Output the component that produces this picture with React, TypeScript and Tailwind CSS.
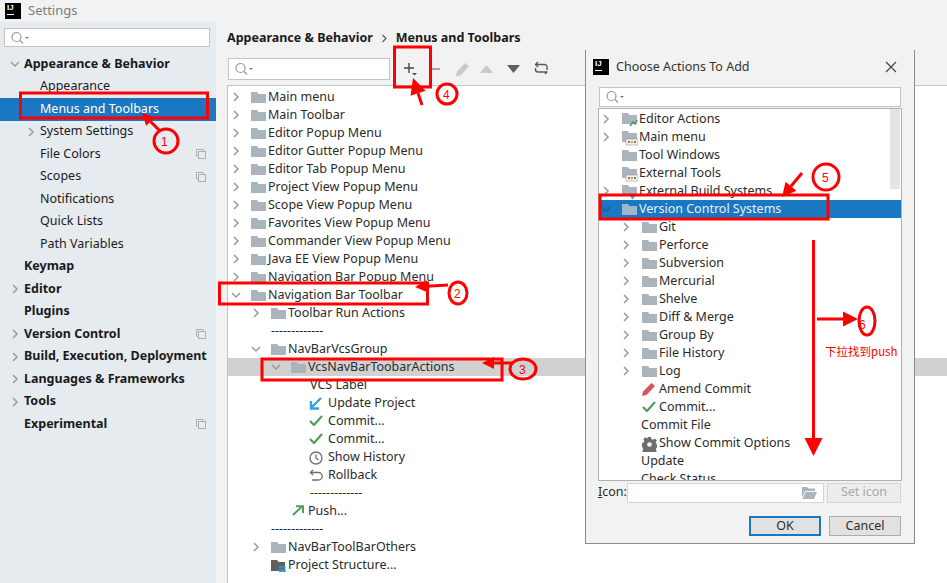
import type { ReactNode } from "react";

const FONT = "font-['Noto_Sans','Open_Sans',sans-serif]";

function Chevron({ open, dark }: { open?: boolean; dark?: boolean }) {
  const color = dark ? "#0f5f9c" : "#9a9a9a";
  return (
    <svg width="10" height="10" viewBox="0 0 10 10" fill="none" stroke={color} strokeWidth="1.5">
      {open ? <path d="M1 3l4 4 4-4" /> : <path d="M3 1l4 4-4 4" />}
    </svg>
  );
}

function Folder({ tint = "#aab4bd" }: { tint?: string }) {
  return (
    <svg width="15" height="13" viewBox="0 0 15 13" fill={tint}>
      <path d="M0 1h6l1.5 2H15v9H0z" />
    </svg>
  );
}

function FolderBadge({ kind }: { kind: "chart" | "bars" | "cloud" }) {
  return (
    <svg width="16" height="15" viewBox="0 0 16 15">
      <path d="M0 0h6l1.5 2H15v9H0z" fill="#aab4bd" />
      {kind === "chart" && <path d="M8 13l3-4 2 2 2-4" fill="none" stroke="#4f9d5d" strokeWidth="1.6" />}
      {kind === "bars" && (
        <g>
          <rect x="4" y="8" width="12" height="6" fill="#f2f2f2" stroke="#999" strokeWidth="0.6" />
          <rect x="6" y="10" width="2" height="2" fill="#e05555" />
          <rect x="9" y="10" width="2" height="2" fill="#e0a040" />
          <rect x="12" y="10" width="2" height="2" fill="#4f9d5d" />
        </g>
      )}
      {kind === "cloud" && <path d="M8 11h5l-2.500 3.500z" fill="#3d9ee0" />}
    </svg>
  );
}

function CheckIcon() {
  return (
    <svg width="14" height="11" viewBox="0 0 14 11" fill="none" stroke="#4f9d5d" strokeWidth="2.200">
      <path d="M1 6l4 4 8-9" />
    </svg>
  );
}

function IjLogo({ size }: { size: number }) {
  return (
    <span
      className="flex flex-col items-start bg-black text-white font-['Liberation_Sans',sans-serif] font-bold leading-none pl-[2px] pt-[1px]"
      style={{ width: size, height: size, fontSize: size * 0.5 }}
    >
      IJ
      <span className="block bg-white h-[1px] w-[7px] mt-[2px]" />
    </span>
  );
}

function SearchIcon() {
  return (
    <svg width="22" height="14" viewBox="0 0 22 14" fill="none" stroke="#9a9a9a" strokeWidth="1.2">
      <circle cx="6.500" cy="6" r="4.500" />
      <path d="M10 9.500l3 3" />
      <path d="M15 6h4l-2 2z" fill="#777" stroke="none" />
    </svg>
  );
}

function CopyIcon() {
  return (
    <svg width="10" height="10" viewBox="0 0 10 10" fill="none" stroke="#aab0b6" strokeWidth="1">
      <rect x="0.500" y="0.500" width="6.500" height="6.500" />
      <rect x="2.500" y="2.500" width="7" height="7" fill="#e6ebf0" />
    </svg>
  );
}

type SideRow = { label: string; bold?: boolean; indent?: boolean; chevron?: "open" | "closed"; copy?: boolean; selected?: boolean };

const sideRows: SideRow[] = [
  { label: "Appearance & Behavior", bold: true, chevron: "open" },
  { label: "Appearance", indent: true },
  { label: "Menus and Toolbars", indent: true, selected: true },
  { label: "System Settings", indent: true, chevron: "closed" },
  { label: "File Colors", indent: true, copy: true },
  { label: "Scopes", indent: true, copy: true },
  { label: "Notifications", indent: true },
  { label: "Quick Lists", indent: true },
  { label: "Path Variables", indent: true },
  { label: "Keymap", bold: true },
  { label: "Editor", bold: true, chevron: "closed" },
  { label: "Plugins", bold: true },
  { label: "Version Control", bold: true, chevron: "closed", copy: true },
  { label: "Build, Execution, Deployment", bold: true, chevron: "closed" },
  { label: "Languages & Frameworks", bold: true, chevron: "closed" },
  { label: "Tools", bold: true, chevron: "closed" },
  { label: "Experimental", bold: true, copy: true },
];

function Sidebar() {
  return (
    <aside className="w-[216px] shrink-0 bg-[#e6ebf0] flex flex-col">
      <div className="ml-[4px] w-[206px] mt-[6px] h-[19px] bg-white border border-[#c4c4c4] flex items-center pl-[5px]">
        <SearchIcon />
      </div>
      <div className="mt-[6px] flex flex-col">
        {sideRows.map((row) => (
          <div
            key={row.label}
            className={`h-[22.5px] flex items-center relative ${row.indent ? "pl-[40px]" : "pl-[24px]"} ${
              row.selected ? "bg-[#1a78c2] text-white" : "text-[#1a1a1a]"
            } ${row.bold ? "font-bold" : ""}`}
          >
            {row.chevron && (
              <span className={`absolute top-[6px] ${row.indent ? "left-[26px]" : "left-[10px]"}`}>
                <Chevron open={row.chevron === "open"} />
              </span>
            )}
            {row.label}
            {row.copy && (
              <span className="absolute left-[196px] top-[6px]">
                <CopyIcon />
              </span>
            )}
          </div>
        ))}
      </div>
    </aside>
  );
}

type TreeRow = {
  label: string;
  level: number;
  chevron?: "open" | "closed";
  icon?: ReactNode;
  left?: number;
  selected?: boolean;
};

const popupLabels = [
  "Main menu",
  "Main Toolbar",
  "Editor Popup Menu",
  "Editor Gutter Popup Menu",
  "Editor Tab Popup Menu",
  "Project View Popup Menu",
  "Scope View Popup Menu",
  "Favorites View Popup Menu",
  "Commander View Popup Menu",
  "Java EE View Popup Menu",
  "Navigation Bar Popup Menu",
];

const mainRows: TreeRow[] = [
  ...popupLabels.map((label) => ({ label, level: 0, chevron: "closed" as const, icon: <Folder /> })),
  { label: "Navigation Bar Toolbar", level: 0, chevron: "open", icon: <Folder /> },
  { label: "Toolbar Run Actions", level: 1, chevron: "closed", icon: <Folder /> },
  { label: "-------------", level: 1, left: 43 },
  { label: "NavBarVcsGroup", level: 1, chevron: "open", icon: <Folder /> },
  { label: "VcsNavBarToobarActions", level: 2, chevron: "open", icon: <Folder />, selected: true },
  { label: "VCS Label", level: 3, left: 82 },
  {
    label: "Update Project",
    level: 3,
    icon: (
      <svg width="14" height="13" viewBox="0 0 14 13" fill="none" stroke="#3d9ee0" strokeWidth="2.400">
        <path d="M12 1L3 10M2 4v7.500h8" />
      </svg>
    ),
  },
  { label: "Commit...", level: 3, icon: <CheckIcon /> },
  { label: "Commit...", level: 3, icon: <CheckIcon /> },
  {
    label: "Show History",
    level: 3,
    icon: (
      <svg width="14" height="14" viewBox="0 0 14 14" fill="none" stroke="#6e6e6e" strokeWidth="1.3">
        <circle cx="7" cy="7" r="6" />
        <path d="M7 3.500V7l2.500 2" />
      </svg>
    ),
  },
  {
    label: "Rollback",
    level: 3,
    icon: (
      <svg width="14" height="13" viewBox="0 0 14 13" fill="none" stroke="#6e6e6e" strokeWidth="1.3">
        <path d="M4 1L1.500 3.500 4 6M2 3.500h7.500a3.500 3.500 0 010 7.500H3" />
      </svg>
    ),
  },
  { label: "-------------", level: 3, left: 82 },
  {
    label: "Push...",
    level: 2,
    left: 64,
    icon: (
      <svg width="12" height="11" viewBox="0 0 12 11" fill="none" stroke="#4f9d5d" strokeWidth="2">
        <path d="M1 10l9-8.500M4 1.200h7V8" />
      </svg>
    ),
  },
  { label: "-------------", level: 1, left: 43 },
  { label: "NavBarToolBarOthers", level: 1, chevron: "closed", icon: <Folder /> },
  {
    label: "Project Structure...",
    level: 1,
    icon: (
      <svg width="15" height="13" viewBox="0 0 15 13">
        <path d="M0 1h6l1.500 2H14v9H0z" fill="#5f5f5f" />
        <path d="M8 7h3v2.500H8zM11.500 7h3v2.500h-3zM8 10h3v3H8zM11.500 10h3v3h-3z" fill="#2f8fd8" />
      </svg>
    ),
  },
];

function Row({ row, origin, iconGap, textGap, blue }: { row: TreeRow; origin: number; iconGap: number; textGap: number; blue?: boolean }) {
  const step = 20;
  const chevronLeft = origin + row.level * step;
  const iconLeft = row.left !== undefined ? row.left : origin + iconGap + row.level * step - (row.level === 3 ? 2 : 0);
  const textLeft =
    row.left !== undefined && !row.icon ? row.left : row.left !== undefined ? row.left + 16 : origin + textGap + row.level * step;
  const rowStyle = row.selected ? (blue ? "bg-[#1a78c2] text-[#e8f1f8]" : "bg-[#d1d1d1]") : "";
  return (
    <div className={`h-[18px] relative whitespace-nowrap ${rowStyle}`}>
      {row.chevron && (
        <span className="absolute top-[4px]" style={{ left: chevronLeft }}>
          <Chevron open={row.chevron === "open"} dark={blue && row.selected} />
        </span>
      )}
      {row.icon && (
        <span className="absolute top-[3px]" style={{ left: iconLeft }}>
          {row.icon}
        </span>
      )}
      <span className="absolute top-0 leading-[18px]" style={{ left: textLeft }}>
        {row.label}
      </span>
    </div>
  );
}

function Toolbar() {
  return (
    <div className="flex items-center">
      <div className="w-[162px] h-[22px] ml-[1px] bg-white border border-[#c4c4c4] flex items-center pl-[5px]">
        <SearchIcon />
      </div>
      <div className="flex items-center ml-[13px]">
        <svg width="16" height="18" viewBox="0 0 16 18" fill="none" stroke="#4a4a4a" strokeWidth="1.4">
          <path d="M6 3v10M1 8h10" />
          <path d="M9 13h5l-2.500 2.500z" fill="#4a4a4a" stroke="none" />
        </svg>
        <svg className="ml-[10px]" width="12" height="12" viewBox="0 0 12 12" stroke="#7a7a7a" strokeWidth="1.3">
          <path d="M1 6h10" />
        </svg>
        <svg className="ml-[14px]" width="15" height="15" viewBox="0 0 15 15" fill="#c9c9c9">
          <path d="M10 1l4 3.500-8 8.500-5 1.500 1-5z" />
        </svg>
        <svg className="ml-[10px]" width="13" height="8" viewBox="0 0 13 8" fill="#c9c9c9">
          <path d="M6.500 0L13 8H0z" />
        </svg>
        <svg className="ml-[14px]" width="13" height="8" viewBox="0 0 13 8" fill="#5f5f5f">
          <path d="M6.500 8L13 0H0z" />
        </svg>
        <svg className="ml-[14px]" width="15" height="16" viewBox="0 0 15 16" fill="none" stroke="#5a5a5a" strokeWidth="1.4">
          <path d="M4 1L1.500 3.500 4 6M2 3.500h8.500a2.500 2.500 0 012.500 2.500v3" />
          <path d="M11 13l2.500-2.500M1.500 7v1.500a2.500 2.500 0 002.500 2.500h9" />
        </svg>
      </div>
    </div>
  );
}

const dialogRows: TreeRow[] = [
  { label: "Editor Actions", level: 0, chevron: "closed", icon: <FolderBadge kind="chart" /> },
  { label: "Main menu", level: 0, chevron: "closed", icon: <FolderBadge kind="bars" /> },
  { label: "Tool Windows", level: 0, icon: <Folder /> },
  { label: "External Tools", level: 0, icon: <FolderBadge kind="bars" /> },
  { label: "External Build Systems", level: 0, chevron: "closed", icon: <FolderBadge kind="cloud" /> },
  { label: "Version Control Systems", level: 0, chevron: "open", icon: <Folder tint="#9fb6c9" />, selected: true },
  ...["Git", "Perforce", "Subversion", "Mercurial", "Shelve", "Diff & Merge", "Group By", "File History", "Log"].map(
    (label) => ({ label, level: 1, chevron: "closed" as const, icon: <Folder /> }),
  ),
  {
    label: "Amend Commit",
    level: 1,
    icon: (
      <svg width="14" height="13" viewBox="0 0 14 13" fill="#d9535f">
        <path d="M9.500 0L13 3 4.500 12 0 13l1-4.500z" />
      </svg>
    ),
  },
  { label: "Commit...", level: 1, icon: <CheckIcon /> },
  { label: "Commit File", level: 1, left: 42 },
  {
    label: "Show Commit Options",
    level: 1,
    icon: (
      <svg width="15" height="15" viewBox="0 0 15 15" fill="#6e6e6e">
        <path d="M6 0h3l.4 2 1.700.7 1.700-1.100 2 2-1.100 1.700.7 1.700 1.600.4v3l-1.600.4-.7 1.700 1.100 1.700-2 2-1.700-1.100-1.700.7-.4 1.600H6l-.4-1.600-1.700-.7-1.700 1.100-2-2 1.100-1.700-.7-1.700L0 9V6l1.600-.4.7-1.700L1.200 2.200l2-2 1.700 1.100L5.600 1z" />
        <circle cx="7.500" cy="7.500" r="2.300" fill="#f7f7f7" />
      </svg>
    ),
  },
  { label: "Update", level: 1, left: 42 },
  { label: "Check Status", level: 1, left: 42 },
];

function ChooseActionsDialog() {
  return (
    <div className="absolute left-[585px] top-[50px] w-[330px] h-[494px] bg-[#f2f2f2] border-x border-b border-[#8a8a8a] flex flex-col px-[13px]">
      <div className="h-[35px] flex items-center relative">
        <span className="-ml-[6px] mr-[7px] mt-[-1px]">
          <IjLogo size={16} />
        </span>
        <span className="text-[#333]">Choose Actions To Add</span>
        <svg className="absolute left-[286px] top-[11px]" width="12" height="12" viewBox="0 0 12 12" stroke="#444" strokeWidth="1.2">
          <path d="M1 1l10 10M11 1L1 11" />
        </svg>
      </div>
      <div className="h-[20px] mt-[2px] w-[302px] bg-white border border-[#c4c4c4] flex items-center pl-[5px]">
        <SearchIcon />
      </div>
      <div className="mt-[1px] -ml-[1px] w-[304px] h-[373px] bg-white border border-[#b0b0b0] relative overflow-hidden pt-[1px]">
        {dialogRows.map((row, i) => (
          <Row key={row.label + i} row={row} origin={2} iconGap={21} textGap={38} blue />
        ))}
        <div className="absolute right-[1px] top-0 w-[10px] h-[80px] bg-[#e4e4e4]" />
      </div>
      <div className="flex items-center h-[21px] mt-[1px]">
        <span className="w-[29px] -ml-[1px]">
          <span className="underline">I</span>con:
        </span>
        <div className="w-[197px] h-[20px] bg-white border border-[#d5d5d5] flex justify-end items-center pr-[6px]">
          <svg width="15" height="12" viewBox="0 0 15 12" fill="#aab4bd">
            <path d="M0 0h5l1.500 1.500H13V4H3L0 11zM3.500 5H15l-3 7H.7z" />
          </svg>
        </div>
        <div className="w-[74px] h-[20px] ml-[3px] border border-[#d5d5d5] bg-[#ededed] flex items-center justify-center text-[#a8a8a8]">
          Set icon
        </div>
      </div>
      <div className="flex justify-end gap-[8px] mt-[13px]">
        <div className="w-[72px] h-[20px] border-2 border-[#1a78c2] bg-[#e1e1e1] flex items-center justify-center">OK</div>
        <div className="w-[72px] h-[20px] border border-[#adadad] bg-[#e1e1e1] flex items-center justify-center">Cancel</div>
      </div>
    </div>
  );
}

const RED = "#ff0000";

function Arrow({ x1, y1, x2, y2, size = 12 }: { x1: number; y1: number; x2: number; y2: number; size?: number }) {
  const a = Math.atan2(y2 - y1, x2 - x1);
  const bx = x2 - Math.cos(a) * size;
  const by = y2 - Math.sin(a) * size;
  const hw = size * 0.5;
  const p1 = `${bx - Math.sin(a) * hw},${by + Math.cos(a) * hw}`;
  const p2 = `${bx + Math.sin(a) * hw},${by - Math.cos(a) * hw}`;
  return (
    <g>
      <line x1={x1} y1={y1} x2={bx} y2={by} stroke={RED} strokeWidth="3" />
      <polygon points={`${x2},${y2} ${p1} ${p2}`} fill={RED} />
    </g>
  );
}

function Annotations() {
  const box = { fill: "none", stroke: RED, strokeWidth: 3 };
  return (
    <svg className="absolute left-0 top-0 pointer-events-none" width="947" height="583" viewBox="0 0 947 583">
      <rect x="20.500" y="93" width="187" height="25" {...box} />
      <Arrow x1={160} y1={131} x2={142} y2={113} />
      <circle cx="166" cy="141" r="12" {...box} />
      <rect x="219.500" y="283" width="208" height="21" {...box} />
      <Arrow x1={448} y1={285} x2={415} y2={287} />
      <ellipse cx="458" cy="293" rx="9" ry="11" {...box} />
      <rect x="262" y="359" width="240" height="21" {...box} />
      <Arrow x1={512} y1={363} x2={482} y2={363} />
      <ellipse cx="523" cy="369" rx="13" ry="10" {...box} />
      <rect x="394.500" y="47" width="36" height="40" {...box} />
      <Arrow x1={422} y1={105} x2={413} y2={78} size={16} />
      <circle cx="447" cy="94" r="10" {...box} />
      <rect x="600" y="195" width="228" height="24" {...box} />
      <Arrow x1={802} y1={173} x2={782} y2={197} size={14} />
      <circle cx="826" cy="177" r="13" {...box} />
      <Arrow x1={813.500} y1={240} x2={813.500} y2={456} size={18} />
      <Arrow x1={817} y1={319} x2={858} y2={319} size={15} />
      <ellipse cx="867" cy="321" rx="8" ry="14" {...box} />
      <g fill={RED} fontFamily="'Liberation Sans', sans-serif" fontSize="12">
        <text x="161" y="146">1</text>
        <text x="454" y="298">2</text>
        <text x="519" y="374">3</text>
        <text x="443" y="99">4</text>
        <text x="822" y="182">5</text>
        <text x="859" y="329">6</text>
        <text x="825" y="356" fontSize="11.500" fontFamily="'Noto Sans CJK SC', sans-serif">下拉找到push</text>
      </g>
    </svg>
  );
}

export default function App() {
  return (
    <div className={`${FONT} relative w-[947px] h-[583px] overflow-hidden bg-[#f2f2f2] text-[12.500px] text-[#2b2b2b] flex flex-col`}>
      <div className="h-[22px] shrink-0 flex items-center pl-[5px] gap-[7px] text-[#7d7d7d] text-[13px]">
        <IjLogo size={16} />
        Settings
      </div>
      <div className="flex flex-1 min-h-0">
        <Sidebar />
        <main className="flex-1 min-w-0 pl-[11px] flex flex-col">
          <div className="h-[32px] mb-[4px] flex items-center font-bold gap-[8px] text-[#1a1a1a]">
            <span>Appearance &amp; Behavior</span>
            <svg width="7" height="9" viewBox="0 0 7 9" fill="none" stroke="#555" strokeWidth="1.1">
              <path d="M1.500 1l3.500 3.500L1.500 8" />
            </svg>
            <span>Menus and Toolbars</span>
          </div>
          <Toolbar />
          <div className="mt-[5px] flex-1 bg-white border-l border-t border-[#c4c4c4] pt-[2px] overflow-hidden">
            {mainRows.map((row, i) => (
              <Row key={row.label + i} row={row} origin={3} iconGap={20} textGap={37} />
            ))}
          </div>
        </main>
      </div>
      <ChooseActionsDialog />
      <Annotations />
    </div>
  );
}
